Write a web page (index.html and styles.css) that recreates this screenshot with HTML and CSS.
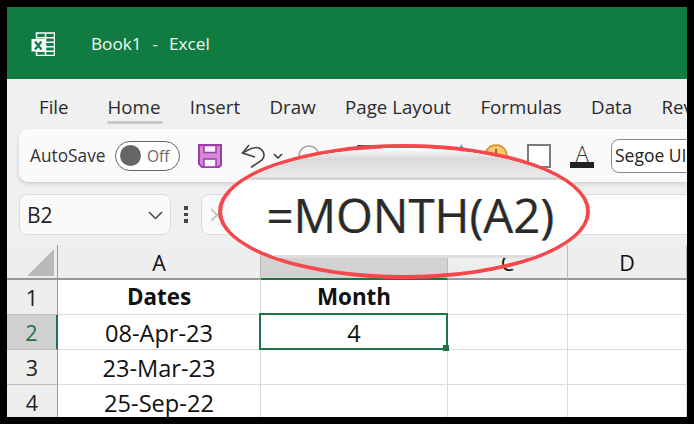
FILE: index.html
```html
<!DOCTYPE html>
<html lang="en">
<head>
<meta charset="utf-8">
<title>Book1 - Excel</title>
<link rel="stylesheet" href="styles.css">
</head>
<body>
<div class="window">
  <header class="title">
    <svg class="logo" width="24" height="24" viewBox="0 0 24 24">
      <path d="M5.500 1h18v22.500h-18z" fill="none" stroke="#fff" stroke-width="1.500"/>
      <path d="M5.500 5.700h18M5.500 10.300h18M5.500 14.700h18M5.500 19.200h18M14.500 1v22.500" stroke="#fff" stroke-width="1.500"/>
      <path d="M0.500 7h13.500v12.500H0.500z" fill="#fff"/>
      <path d="M4 9.500l6.500 8M10.500 9.500l-6.500 8" stroke="#107c41" stroke-width="2.200"/>
    </svg>
    <span class="doc">Book1&nbsp; -&nbsp; Excel</span>
  </header>

  <nav class="tabs">
    <span class="tab tab-file">File</span>
    <span class="tab tab-on">Home</span>
    <span class="tab">Insert</span>
    <span class="tab">Draw</span>
    <span class="tab">Page Layout</span>
    <span class="tab">Formulas</span>
    <span class="tab">Data</span>
    <span class="tab">Review</span>
  </nav>

  <div class="qat">
    <span class="autosave">AutoSave</span>
    <span class="toggle"><i class="knob"></i><span class="off">Off</span></span>
    <svg class="i-save" width="24" height="24" viewBox="0 0 24 24">
      <path d="M1 1h22v20l-2 2H4l-3-3z" fill="#d489d6" stroke="#9a3fa8" stroke-width="2"/>
      <path d="M6 1.500h12v7H6z" fill="#fbf3fb" stroke="#9a3fa8" stroke-width="1.500"/>
      <path d="M6 15h12v8H6z" fill="#fbf3fb" stroke="#9a3fa8" stroke-width="1.500"/>
    </svg>
    <svg class="i-undo" width="24" height="24" viewBox="0 0 24 24" fill="none" stroke="#444" stroke-width="1.600">
      <path d="M1.500 9C8 5 14 2 18 4c6 3 6 9 3 12L10 23.500"/>
      <path d="M8 1L1.500 9 14 13"/>
    </svg>
    <svg class="i-drop" width="10" height="6" viewBox="0 0 10 6" fill="none" stroke="#333" stroke-width="1.500"><path d="M1 1l4 4 4-4"/></svg>
    <svg class="i-redo" width="24" height="24" viewBox="0 0 24 24" fill="none" stroke="#aaa" stroke-width="1.600"><circle cx="11" cy="12" r="10"/></svg>
    <svg class="i-dark" width="24" height="24" viewBox="0 0 24 24"><rect x="0" y="1" width="24" height="22" fill="#444"/></svg>
    <svg class="i-blue" width="16" height="24" viewBox="0 0 16 24"><path d="M13 0l3 5-3 19H8z" fill="#3a86d0"/></svg>
    <svg class="i-warn" width="24" height="24" viewBox="0 0 24 24"><circle cx="12" cy="12" r="11" fill="#f7c873" stroke="#d98a1e" stroke-width="1.500"/><path d="M12 5v9" stroke="#a85f10" stroke-width="2"/></svg>
    <i class="i-box"></i>
    <span class="i-font"><span class="i-a">A</span><i class="i-bar"></i></span>
    <span class="fontbox">Segoe UI</span>
  </div>

  <div class="fbar">
    <div class="namebox">
      <span>B2</span>
      <svg width="15" height="9" viewBox="0 0 15 9" fill="none" stroke="#444" stroke-width="1.500"><path d="M1 1l6.500 6.500L14 1"/></svg>
    </div>
    <div class="dots"><i></i><i></i><i></i></div>
    <div class="cancel">
      <svg width="14" height="14" viewBox="0 0 14 14" stroke="#bbb" stroke-width="1.500"><path d="M1 1l12 12M13 1L1 13"/></svg>
    </div>
    <div class="input"></div>
  </div>

  <div class="sheet">
    <div class="hd corner"><i class="tri"></i></div>
    <div class="hd col">A</div>
    <div class="hd col col-on"></div>
    <div class="hd col">C</div>
    <div class="hd col">D</div>

    <div class="hd row">1</div>
    <div class="c b">Dates</div>
    <div class="c b">Month</div>
    <div class="c"></div>
    <div class="c"></div>

    <div class="hd row row-on">2</div>
    <div class="c">08-Apr-23</div>
    <div class="c sel">4<i class="handle"></i></div>
    <div class="c"></div>
    <div class="c"></div>

    <div class="hd row">3</div>
    <div class="c">23-Mar-23</div>
    <div class="c"></div>
    <div class="c"></div>
    <div class="c"></div>

    <div class="hd row">4</div>
    <div class="c">25-Sep-22</div>
    <div class="c"></div>
    <div class="c"></div>
    <div class="c"></div>
  </div>

  <div class="lens">
    <div class="lens-shade"></div>
    <div class="lens-white">=MONTH(A2)</div>
  </div>
</div>
</body>
</html>
```

FILE: styles.css
```css
* { box-sizing: border-box; }
html, body { margin: 0; height: 100%; overflow: hidden; background: #000; }
body { padding: 7px; font-family: "Open Sans", "Noto Sans", sans-serif; color: #222; }
i { display: block; }
.window { position: relative; width: 680px; height: 410px; overflow: hidden; background: #f0f0f0; }

.title { height: 72px; background: #107c41; display: flex; align-items: center; padding-left: 24px; color: #f2f7f4; }
.logo { display: block; margin-top: 1px; }
.doc { margin-left: 36px; font-size: 17.200px; word-spacing: 1px; }

.tabs { height: 49px; display: flex; gap: 29.400px; padding: 16px 0 0 32px; font-size: 18.700px; line-height: 24px; color: #2b2b2b; white-space: nowrap; }
.tab-file { margin-right: 9.600px; }
.tab-on { position: relative; }
.tab-on::after { content: ""; position: absolute; left: -1px; right: -3px; top: 26px; height: 3px; border-radius: 2px; background: #c9c9c9; }

.qat { margin: 1px 0 0 12px; height: 53px; display: flex; align-items: center; padding-left: 11px; background: #fafafa; border-radius: 9px 0 0 9px; box-shadow: 0 2px 4px rgba(0,0,0,.14); overflow: hidden; white-space: nowrap; }
.qat > * { flex: none; }
.qat svg { display: block; }
.autosave { font-size: 17.300px; width: 76px; color: #333; }
.toggle { margin-left: 9px; width: 65px; height: 30px; border: 1.500px solid #666; border-radius: 15px; display: flex; align-items: center; padding-left: 4px; background: #fff; }
.knob { width: 21px; height: 21px; border-radius: 50%; background: #666; }
.off { margin-left: 6px; font-size: 15.500px; color: #666; }
.i-save { margin-left: 18px; }
.i-undo { margin-left: 19px; }
.i-drop { margin-left: 8px; }
.i-redo { margin-left: 15px; }
.i-dark { margin-left: 35px; }
.i-blue { margin-left: 67px; }
.i-warn { margin-left: 20px; }
.i-box { margin-left: 19px; width: 24px; height: 24px; background: #fff; border: 2px solid #7b7b7b; }
.i-font { margin-left: 19px; width: 24px; display: flex; flex-direction: column; align-items: center; }
.i-a { font-size: 22px; line-height: 18px; height: 18px; font-weight: 300; color: #333; }
.i-bar { width: 24px; height: 6px; background: #222; }
.fontbox { margin-left: 17px; width: 120px; height: 34px; border: 1px solid #8a8a8a; border-radius: 8px; background: #fff; padding-left: 3px; font-size: 17.500px; line-height: 31px; color: #222; }

.fbar { margin: 12px 0 0 12px; height: 41px; display: flex; }
.namebox { width: 152px; background: #fafafa; border: 1px solid #dcdcdc; border-radius: 8px; display: flex; align-items: center; justify-content: space-between; padding: 0 7px 0 7px; font-size: 21px; color: #222; }
.namebox svg { display: block; margin-top: 1px; }
.dots { width: 30px; display: flex; flex-direction: column; align-items: center; justify-content: center; gap: 3px; }
.dots i { width: 3.500px; height: 3.500px; background: #444; }
.cancel { width: 60px; background: #fafafa; border: 1px solid #dcdcdc; border-radius: 8px 0 0 8px; padding: 13px 0 0 8px; }
.cancel svg { display: block; }
.input { flex: 1; background: #fff; border-top: 1px solid #dcdcdc; border-bottom: 1px solid #dcdcdc; }

.sheet { margin-top: 10px; display: grid; grid-template-columns: 51px 203px 187px 120px 119px; grid-template-rows: repeat(5, 35px); font-size: 23.600px; color: #111; background: #fff; line-height: 30px; }
.hd { background: #eee; display: flex; align-items: center; justify-content: center; font-size: 21.500px; }
.corner { border-right: 1px solid #999; border-bottom: 2px solid #999; position: relative; }
.tri { position: absolute; left: 20px; top: 4px; border-style: solid; border-width: 0 0 27px 27px; border-color: transparent transparent #b9b9b9 transparent; width: 0; height: 0; }
.col { border-right: 1px solid #bbb; border-bottom: 2px solid #999; padding-top: 3px; }
.col-on { background: #d2d2d2; border-bottom-color: #217346; }
.row { border-right: 1px solid #999; border-bottom: 1px solid #bbb; color: #222; padding-top: 2px; }
.row-on { background: #d0d0d0; border-right: 2px solid #217346; color: #217346; }
.c { border-right: 1px solid #dadada; border-bottom: 1px solid #dadada; display: flex; align-items: center; justify-content: center; padding-top: 2px; }
.b { font-weight: 700; font-size: 22.400px; padding-top: 0; }
.sel { position: relative; }
.sel::before { content: ""; position: absolute; left: -2px; top: -2px; right: -1px; bottom: -1px; border: 2px solid #217346; }
.handle { position: absolute; right: -2px; bottom: -2px; width: 6px; height: 6px; background: #217346; }

.lens { position: absolute; left: 211px; top: 137px; width: 372px; height: 135px; border: 4.500px solid #f5474c; border-radius: 50%; overflow: hidden; padding-left: 8.500px; }
.lens-shade { height: 32px; background: linear-gradient(#fff 0, #d9d9d9 35%, #ececec 90%, #d6d6d6 92%); }
.lens-white { height: 78px; background: #fff; border-bottom: 3px solid #ddd; padding-left: 36px; font-size: 47.300px; line-height: 70px; color: #2a2a2a; white-space: nowrap; text-shadow: -.5px 0 rgba(240,150,60,.55), .5px 0 rgba(40,140,230,.55); }
```
